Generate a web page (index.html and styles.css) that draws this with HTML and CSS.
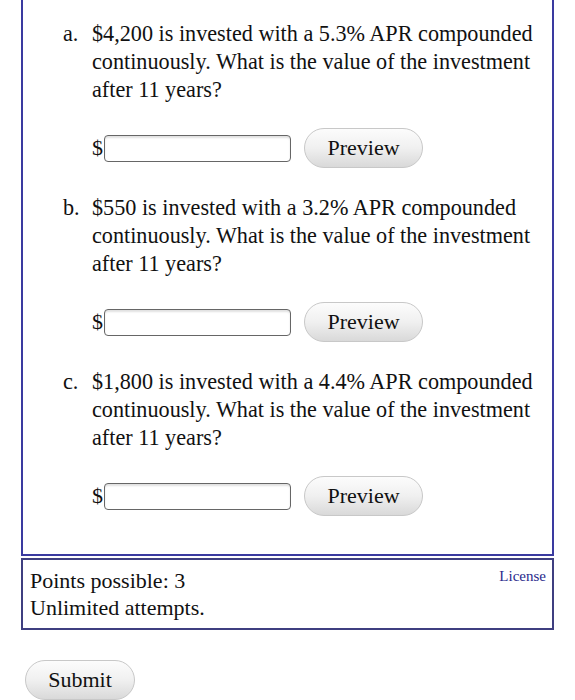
FILE: index.html
```html
<!DOCTYPE html>
<html lang="en">
<head>
    <meta charset="UTF-8">
    <meta name="viewport" content="width=device-width, initial-scale=1.0">
    <title>Question</title>
    <link rel="stylesheet" href="styles.css">
</head>
<body>

    <div class="question-box">
        <div class="question">
            <div class="q-line">
                <span class="q-label">a.</span>
                <p class="q-text">$4,200 is invested with a 5.3% APR compounded continuously. What is the value of the investment after 11 years?</p>
            </div>
            <div class="answer-row">
                <span class="dollar">$</span>
                <input type="text" class="answer-input">
                <button class="pill-btn preview-btn">Preview</button>
            </div>
        </div>

        <div class="question">
            <div class="q-line">
                <span class="q-label">b.</span>
                <p class="q-text">$550 is invested with a 3.2% APR compounded continuously. What is the value of the investment after 11 years?</p>
            </div>
            <div class="answer-row">
                <span class="dollar">$</span>
                <input type="text" class="answer-input">
                <button class="pill-btn preview-btn">Preview</button>
            </div>
        </div>

        <div class="question">
            <div class="q-line">
                <span class="q-label">c.</span>
                <p class="q-text">$1,800 is invested with a 4.4% APR compounded continuously. What is the value of the investment after 11 years?</p>
            </div>
            <div class="answer-row">
                <span class="dollar">$</span>
                <input type="text" class="answer-input">
                <button class="pill-btn preview-btn">Preview</button>
            </div>
        </div>
    </div>

    <div class="points-box">
        <a href="#" class="license">License</a>
        <p>Points possible: 3</p>
        <p>Unlimited attempts.</p>
    </div>

    <button class="pill-btn submit-btn">Submit</button>

</body>
</html>
```

FILE: styles.css
```css
body {
    margin: 0;
    padding-left: 21px;
    font-family: "Liberation Serif", "Times New Roman", serif;
    font-size: 22px;
    color: #111;
    background: white;
}

.question-box {
    width: 489px;
    border: 2px solid #3a3aa0;
    border-top: none;
    padding: 20px 0 38px 40px;
}

.question {
    margin-bottom: 26px;
}

.question:last-child {
    margin-bottom: 0;
}

.q-line {
    display: flex;
    line-height: 28px;
    font-size: 22.2px;
}

.q-label {
    width: 29px;
    flex-shrink: 0;
}

.q-text {
    margin: 0;
    width: 448px;
}

.answer-row {
    display: flex;
    align-items: center;
    margin-top: 24px;
    padding-left: 29px;
    height: 40px;
}

.dollar {
    margin-right: 1px;
}

.answer-input {
    width: 187px;
    height: 27px;
    box-sizing: border-box;
    border: 1px solid #666;
    border-radius: 4px;
    box-shadow: inset 0 2px 2px rgba(0, 0, 0, 0.12);
    padding: 0 4px;
    font-size: 18px;
}

.pill-btn {
    font-family: "Liberation Serif", "Times New Roman", serif;
    font-size: 22px;
    color: #111;
    height: 40px;
    border: 1px solid #c8c8c8;
    border-radius: 20px;
    background: linear-gradient(to bottom, #fcfcfc 0%, #f0f0f0 50%, #d9d9d9 100%);
    cursor: pointer;
    padding: 0;
}

.preview-btn {
    width: 119px;
    margin-left: 13px;
}

.points-box {
    width: 522px;
    margin-top: 2px;
    border: 2px solid #3f3f80;
    padding: 7px 0 7px 7px;
    line-height: 27px;
}

.points-box p {
    margin: 0;
}

.license {
    float: right;
    margin-right: 6px;
    margin-top: 0;
    font-size: 15px;
    line-height: 18px;
    color: #2a2a8c;
    text-decoration: none;
}

.submit-btn {
    width: 110px;
    margin-top: 30px;
    margin-left: 4px;
}
```
